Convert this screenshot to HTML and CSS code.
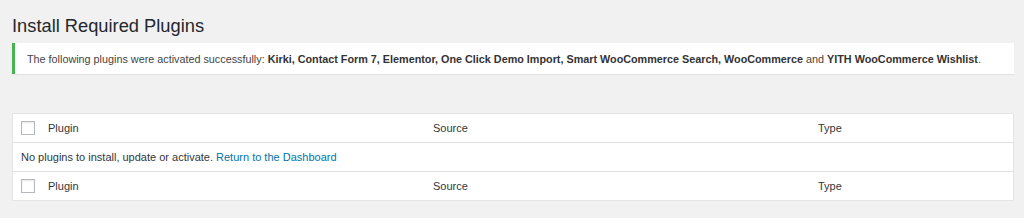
FILE: index.html
```html
<!DOCTYPE html>
<html>
<head>
    <meta charset="UTF-8">
    <title>Install Required Plugins</title>
    <link rel="stylesheet" href="styles.css">
</head>
<body>
    <div class="wrap">
        <h1>Install Required Plugins</h1>

        <div class="notice notice-success">
            <p>The following plugins were activated successfully: <strong>Kirki, Contact Form 7, Elementor, One Click Demo Import, Smart WooCommerce Search, WooCommerce</strong> and <strong>YITH WooCommerce Wishlist</strong>.</p>
        </div>

        <table class="plugins-table">
            <thead>
                <tr>
                    <td class="check-column"><span class="checkbox"></span></td>
                    <th class="col-plugin">Plugin</th>
                    <th class="col-source">Source</th>
                    <th class="col-type">Type</th>
                </tr>
            </thead>
            <tbody>
                <tr>
                    <td class="empty" colspan="4">No plugins to install, update or activate. <a href="#">Return to the Dashboard</a></td>
                </tr>
            </tbody>
            <tfoot>
                <tr>
                    <td class="check-column"><span class="checkbox"></span></td>
                    <th class="col-plugin">Plugin</th>
                    <th class="col-source">Source</th>
                    <th class="col-type">Type</th>
                </tr>
            </tfoot>
        </table>
    </div>
</body>
</html>
```

FILE: styles.css
```css
html, body {
    margin: 0;
    padding: 0;
    background-color: #f1f1f1;
}

body {
    font-family: "Liberation Sans", Arial, sans-serif;
    color: #444;
    font-size: 11px;
}

.wrap {
    padding: 0 10px 0 12px;
}

h1 {
    margin: 0;
    padding: 16px 0 7px 0;
    font-size: 18.3px;
    font-weight: 400;
    line-height: 20px;
    color: #23282d;
}

/* notice */
.notice {
    background-color: #fff;
    border-left: 3px solid #46b450;
    box-shadow: 0 1px 1px rgba(0, 0, 0, 0.06);
    padding: 0 12px;
    height: 31px;
    display: flex;
    align-items: center;
}

.notice p {
    margin: 0;
    font-size: 10.8px;
    color: #444;
}

.notice strong {
    font-weight: 700;
    color: #333;
}

/* table */
.plugins-table {
    margin-top: 39px;
    width: 100%;
    border-collapse: collapse;
    background-color: #fff;
    border: 1px solid #e5e5e5;
    box-shadow: 0 1px 1px rgba(0, 0, 0, 0.04);
}

.plugins-table th,
.plugins-table td {
    height: 28px;
    padding: 0;
    text-align: left;
    font-weight: 400;
    font-size: 11px;
    color: #32373c;
    vertical-align: middle;
}

.plugins-table thead tr {
    border-bottom: 1px solid #e1e1e1;
}

.plugins-table tfoot tr {
    border-top: 1px solid #e1e1e1;
}

.check-column {
    width: 27px;
    padding-left: 8px !important;
}

.checkbox {
    display: block;
    width: 12px;
    height: 12px;
    border: 1px solid #b4b9be;
    background-color: #fff;
    box-shadow: inset 0 1px 2px rgba(0, 0, 0, 0.1);
}

.col-plugin {
    width: 385px;
}

.col-source {
    width: 385px;
}

.empty {
    padding-left: 8px !important;
    color: #444;
}

.empty a {
    color: #0073aa;
    text-decoration: none;
}
```
